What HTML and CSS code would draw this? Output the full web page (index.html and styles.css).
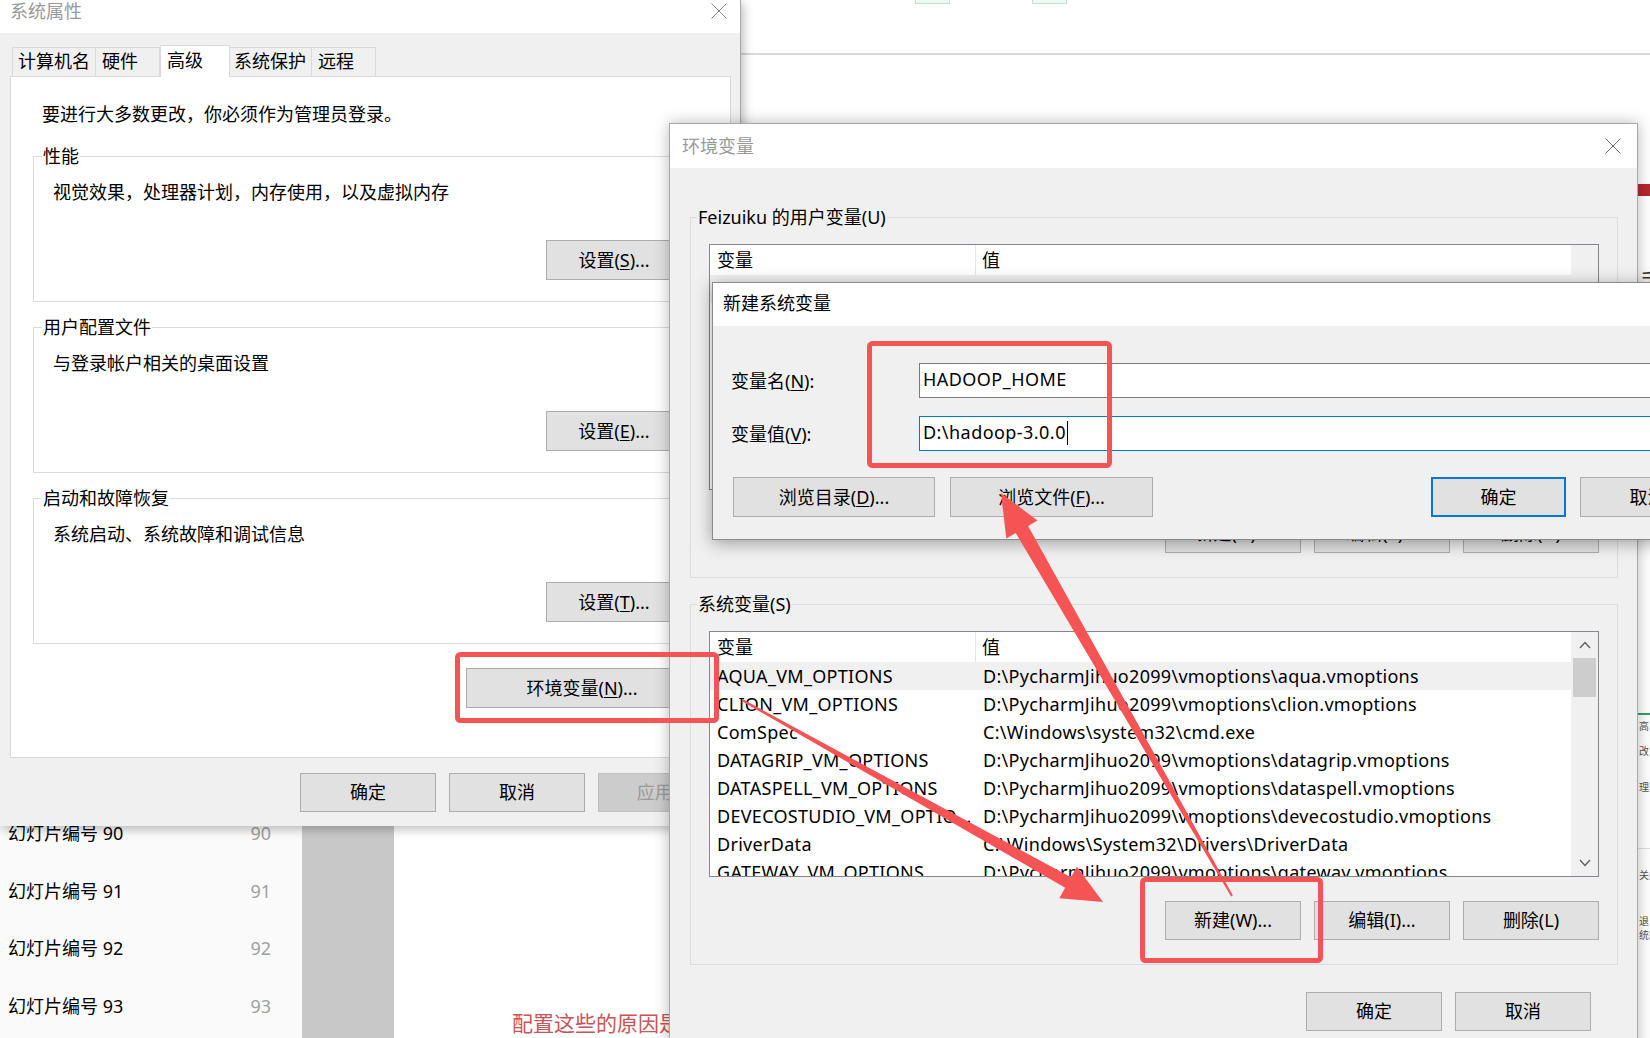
FILE: index.html
```html
<!DOCTYPE html>
<html lang="zh-CN">
<head>
<meta charset="utf-8">
<title>环境变量</title>
<link rel="stylesheet" href="styles.css">
</head>
<body>
<div class="desktop">

  <!-- background application -->
  <div class="bgapp">
    <div class="bg-top">
      <span class="tb-chip"></span>
      <span class="tb-chip"></span>
    </div>
    <div class="bg-main">
      <div class="slides">
        <div class="slide"><span>幻灯片编号 90</span><span class="num">90</span></div>
        <div class="slide"><span>幻灯片编号 91</span><span class="num">91</span></div>
        <div class="slide"><span>幻灯片编号 92</span><span class="num">92</span></div>
        <div class="slide"><span>幻灯片编号 93</span><span class="num">93</span></div>
      </div>
      <div class="gutter"></div>
      <div class="canvas">
        <div class="canvas-body"><p class="red-note">配置这些的原因是</p></div>
        <div class="edge">
          <div class="e-red"></div>
          <div class="e-char">手</div>
          <div class="e-green"></div>
          <div class="e-txt t1">高</div>
          <div class="e-txt t2">改</div>
          <div class="e-txt t3">理器</div>
          <div class="e-line"></div>
          <div class="e-txt t4">关的</div>
          <div class="e-txt t5">退</div>
          <div class="e-txt t6">统故</div>
        </div>
      </div>
    </div>
  </div>

  <!-- 系统属性 -->
  <div class="win sys">
    <div class="titlebar">
      <span class="title">系统属性</span>
      <svg class="close" width="16" height="16" viewBox="0 0 16 16"><path d="M0.5 0.5 L15.5 15.5 M15.5 0.5 L0.5 15.5" stroke="#8a8a8a" stroke-width="1" fill="none"/></svg>
    </div>
    <div class="tabs">
      <div class="tab">计算机名</div>
      <div class="tab">硬件</div>
      <div class="tab active">高级</div>
      <div class="tab">系统保护</div>
      <div class="tab">远程</div>
    </div>
    <div class="panel">
      <p class="intro">要进行大多数更改，你必须作为管理员登录。</p>
      <fieldset class="group">
        <legend>性能</legend>
        <p class="desc">视觉效果，处理器计划，内存使用，以及虚拟内存</p>
        <div class="row-btn"><div class="btn">设置(<u>S</u>)...</div></div>
      </fieldset>
      <fieldset class="group">
        <legend>用户配置文件</legend>
        <p class="desc">与登录帐户相关的桌面设置</p>
        <div class="row-btn"><div class="btn">设置(<u>E</u>)...</div></div>
      </fieldset>
      <fieldset class="group">
        <legend>启动和故障恢复</legend>
        <p class="desc">系统启动、系统故障和调试信息</p>
        <div class="row-btn"><div class="btn">设置(<u>T</u>)...</div></div>
      </fieldset>
      <div class="env-row"><div class="btn wide">环境变量(<u>N</u>)...</div></div>
    </div>
    <div class="sys-foot">
      <div class="btn h39">确定</div>
      <div class="btn h39">取消</div>
      <div class="btn h39 disabled">应用(<u>A</u>)</div>
    </div>
  </div>

  <!-- 环境变量 -->
  <div class="win env">
    <div class="titlebar">
      <span class="title">环境变量</span>
      <svg class="close" width="16" height="16" viewBox="0 0 16 16"><path d="M0.5 0.5 L15.5 15.5 M15.5 0.5 L0.5 15.5" stroke="#6a6a6a" stroke-width="1" fill="none"/></svg>
    </div>
    <div class="env-body">
      <fieldset class="egroup">
        <legend>Feizuiku 的用户变量(U)</legend>
        <div class="lv">
          <div class="lv-main">
            <div class="lv-head"><div class="c1">变量</div><div class="c2">值</div></div>
            <div class="lv-row sel"><div class="c1">OneDrive</div><div class="c2">C:\Users\Feizuiku\OneDrive</div></div>
            <div class="lv-row"><div class="c1">Path</div><div class="c2">C:\Users\Feizuiku\AppData\Local\Microsoft\WindowsApps;</div></div>
            <div class="lv-row"><div class="c1">TEMP</div><div class="c2">C:\Users\Feizuiku\AppData\Local\Temp</div></div>
            <div class="lv-row"><div class="c1">TMP</div><div class="c2">C:\Users\Feizuiku\AppData\Local\Temp</div></div>
          </div>
          <div class="lv-scroll"></div>
        </div>
        <div class="btn-row">
          <div class="btn h39">新建(N)...</div>
          <div class="btn h39">编辑(E)...</div>
          <div class="btn h39">删除(D)</div>
        </div>
      </fieldset>
      <fieldset class="egroup">
        <legend>系统变量(S)</legend>
        <div class="lv">
          <div class="lv-main">
            <div class="lv-head"><div class="c1">变量</div><div class="c2">值</div></div>
            <div class="lv-row sel"><div class="c1">AQUA_VM_OPTIONS</div><div class="c2">D:\PycharmJihuo2099\vmoptions\aqua.vmoptions</div></div>
            <div class="lv-row"><div class="c1">CLION_VM_OPTIONS</div><div class="c2">D:\PycharmJihuo2099\vmoptions\clion.vmoptions</div></div>
            <div class="lv-row"><div class="c1">ComSpec</div><div class="c2">C:\Windows\system32\cmd.exe</div></div>
            <div class="lv-row"><div class="c1">DATAGRIP_VM_OPTIONS</div><div class="c2">D:\PycharmJihuo2099\vmoptions\datagrip.vmoptions</div></div>
            <div class="lv-row"><div class="c1">DATASPELL_VM_OPTIONS</div><div class="c2">D:\PycharmJihuo2099\vmoptions\dataspell.vmoptions</div></div>
            <div class="lv-row"><div class="c1">DEVECOSTUDIO_VM_OPTIO...</div><div class="c2">D:\PycharmJihuo2099\vmoptions\devecostudio.vmoptions</div></div>
            <div class="lv-row"><div class="c1">DriverData</div><div class="c2">C:\Windows\System32\Drivers\DriverData</div></div>
            <div class="lv-row"><div class="c1">GATEWAY_VM_OPTIONS</div><div class="c2">D:\PycharmJihuo2099\vmoptions\gateway.vmoptions</div></div>
          </div>
          <div class="lv-scroll">
            <div class="sb-arrow"><svg width="12" height="8" viewBox="0 0 12 8"><polyline points="1,7 6,1.5 11,7" fill="none" stroke="#606060" stroke-width="1.4"/></svg></div>
            <div class="sb-thumb"></div>
            <div class="sb-track"></div>
            <div class="sb-arrow"><svg width="12" height="8" viewBox="0 0 12 8"><polyline points="1,1 6,6.5 11,1" fill="none" stroke="#606060" stroke-width="1.4"/></svg></div>
          </div>
        </div>
        <div class="btn-row">
          <div class="btn h39">新建(W)...</div>
          <div class="btn h39">编辑(I)...</div>
          <div class="btn h39">删除(L)</div>
        </div>
      </fieldset>
      <div class="env-foot">
        <div class="btn h39">确定</div>
        <div class="btn h39">取消</div>
      </div>
    </div>
  </div>

  <!-- 新建系统变量 -->
  <div class="win nv">
    <div class="titlebar"><span class="title">新建系统变量</span></div>
    <div class="nv-body">
      <div class="nv-row">
        <div class="nv-label">变量名(<u>N</u>):</div>
        <div class="field">HADOOP_HOME</div>
      </div>
      <div class="nv-row second">
        <div class="nv-label">变量值(<u>V</u>):</div>
        <div class="field focus">D:\hadoop-3.0.0<span class="caret"></span></div>
      </div>
      <div class="nv-btns">
        <div class="btn browse">浏览目录(<u>D</u>)...</div>
        <div class="btn browse">浏览文件(<u>F</u>)...</div>
        <div class="btn primary">确定</div>
        <div class="btn ok">取消</div>
      </div>
    </div>
  </div>

  <!-- annotations -->
  <svg class="annot" width="1650" height="1038" viewBox="0 0 1650 1038">
    <g fill="none" stroke="#f65454" stroke-width="5" stroke-linejoin="round">
      <rect x="457.5" y="654.5" width="259" height="66" rx="3"/>
      <rect x="869.5" y="343.5" width="240" height="122" rx="3"/>
      <rect x="1142.5" y="879.5" width="178" height="81" rx="3"/>
    </g>
    <g fill="#f65454">
      <polygon points="741.5,700.9 1065.2,887.7 1059.3,898.2 1103,902 1076.9,866.8 1071.0,877.3 742.5,699.1"/>
      <polygon points="1232.9,895.5 1028.1,525.9 1037.5,520.6 1001,493 1006.3,538.4 1015.7,533.1 1231.1,896.5"/>
    </g>
  </svg>
</div>
</body>
</html>
```

FILE: styles.css
```css
* { box-sizing: border-box; }
html, body { margin: 0; padding: 0; }
body {
  width: 1650px;
  height: 1038px;
  overflow: hidden;
  background: #fff;
  color: #000;
  font-family: "Noto Sans", "Noto Sans CJK SC", sans-serif;
  font-size: 18px;
  line-height: 24px;
}
u { text-decoration: underline; text-underline-offset: 2px; }
p { margin: 0; }

.desktop { position: relative; width: 1650px; height: 1038px; overflow: hidden; }

/* ---------- background app ---------- */
.bgapp { display: flex; flex-direction: column; height: 100%; }
.bg-top {
  height: 55px;
  flex-shrink: 0;
  border-bottom: 2px solid #d9d9d9;
  display: flex;
  gap: 82px;
  padding-left: 915px;
}
.tb-chip {
  width: 35px;
  height: 4px;
  background: #eef9f3;
  border: 1px solid #bfe3cf;
  border-top: 0;
}
.bg-main { flex: 1; display: grid; grid-template-columns: 302px 92px 1fr; }
.slides { background: #fafafa; padding-top: 749px; }
.slide {
  height: 57.7px;
  display: flex;
  align-items: center;
  justify-content: space-between;
  padding: 0 31px 0 8px;
  white-space: nowrap;
}
.slide .num { color: #a0a0a0; }
.gutter { background: #c8c8c8; }
.canvas { display: flex; background: #fff; }
.canvas-body { flex: 1; padding: 955px 0 0 118px; }
.red-note { font-size: 21px; line-height: 26px; color: #c9545a; white-space: nowrap; }
.edge { width: 12px; overflow: hidden; display: flex; flex-direction: column; }
.e-red { margin-top: 129px; height: 12px; background: #b3282d; flex-shrink: 0; }
.e-char { margin-top: 73px; font-size: 22px; line-height: 22px; padding-left: 2px; color: #333; white-space: nowrap; }
.e-green { margin-top: 422px; height: 2px; background: #2aa66a; flex-shrink: 0; }
.e-txt { font-size: 10px; line-height: 12px; color: #555; white-space: nowrap; padding-left: 1px; }
.e-txt.t1 { margin-top: 5px; }
.e-txt.t2 { margin-top: 13px; }
.e-txt.t3 { margin-top: 24px; }
.e-line { margin-top: 55px; height: 1px; background: #ddd; flex-shrink: 0; }
.e-txt.t4 { margin-top: 20px; }
.e-txt.t5 { margin-top: 34px; }
.e-txt.t6 { margin-top: 2px; }

/* ---------- generic window bits ---------- */
.win { position: absolute; display: flex; flex-direction: column; }
.titlebar { background: #fff; display: flex; align-items: center; flex-shrink: 0; }
.close { display: block; flex-shrink: 0; }

.btn {
  height: 40px;
  width: 136px;
  flex-shrink: 0;
  background: #e1e1e1;
  border: 1px solid #adadad;
  text-align: center;
  line-height: 38px;
  white-space: nowrap;
}
.btn.h39 { height: 39px; line-height: 37px; }
.btn.disabled { background: #cccccc; border-color: #bfbfbf; color: #9a9a9a; }

/* ---------- 系统属性 ---------- */
.sys {
  left: 0;
  top: 0;
  width: 741px;
  height: 826px;
  background: #f0f0f0;
  border-right: 1px solid #a8a8a8;
  box-shadow: 2px 3px 10px rgba(0, 0, 0, 0.28);
}
.sys .titlebar { height: 33px; padding-left: 10px; align-items: flex-start; }
.sys .title { line-height: 22px; color: #999; }
.sys .close { margin-left: auto; margin-right: 13px; margin-top: 3px; }

.tabs { height: 43px; display: flex; align-items: flex-end; padding-left: 12px; flex-shrink: 0; }
.tab {
  height: 29px;
  line-height: 27px;
  padding-left: 6px;
  background: #f0f0f0;
  border-top: 1px solid #d9d9d9;
  border-right: 1px solid #d9d9d9;
  white-space: nowrap;
}
.tab:nth-child(1) { width: 84px; border-left: 1px solid #d9d9d9; padding-left: 5px; }
.tab:nth-child(2) { width: 64px; }
.tab:nth-child(3) { width: 70px; }
.tab:nth-child(4) { width: 82px; padding-left: 4px; }
.tab:nth-child(5) { width: 64px; }
.tab.active {
  height: 32px;
  line-height: 29px;
  background: #fff;
  border-left: 1px solid #d9d9d9;
  margin-bottom: -1px;
  position: relative;
  z-index: 1;
}

.panel {
  margin: 0 9px 0 10px;
  height: 682px;
  flex-shrink: 0;
  background: #fff;
  border: 1px solid #d9d9d9;
  padding: 25px 22px 0 22px;
  display: flex;
  flex-direction: column;
}
.intro { padding-left: 9px; line-height: 24px; }
.group {
  margin: 19px 0 0;
  padding: 13px 25px 21px 0;
  border: 1px solid #dcdcdc;
  min-width: 0;
}
.group + .group { margin-top: 14px; }
.group legend { margin-left: 8px; padding: 0 1px; line-height: 22px; }
.group .desc { padding-left: 19px; line-height: 24px; }
.row-btn { display: flex; justify-content: flex-end; margin-top: 36px; }
.env-row { display: flex; justify-content: flex-end; margin-top: 24px; margin-right: 10px; }
.btn.wide { width: 232px; }
.sys-foot { display: flex; justify-content: flex-end; gap: 13px; padding-right: 6px; margin-top: 15px; }

/* ---------- 环境变量 ---------- */
.env {
  left: 669px;
  top: 123px;
  width: 969px;
  height: 940px;
  background: #f0f0f0;
  border: 1px solid #a8a8a8;
  box-shadow: 0 0 14px rgba(0, 0, 0, 0.28);
}
.env .titlebar { height: 44px; padding-left: 12px; }
.env .title { color: #999; line-height: 24px; }
.env .close { margin-left: auto; margin-right: 16px; }
.env-body { padding: 0 19px 0 20px; display: flex; flex-direction: column; }
.egroup {
  margin: 38px 0 0;
  padding: 16px 0 24px;
  border: 1px solid #dcdcdc;
  min-width: 0;
}
.egroup + .egroup { margin-top: 15px; }
.egroup legend { margin-left: 6px; padding: 0 1px; line-height: 22px; }

.lv {
  margin: 0 18px;
  height: 246px;
  border: 1px solid #828790;
  background: #fff;
  display: flex;
  overflow: hidden;
}
.lv-main { flex: 1; min-width: 0; overflow: hidden; }
.lv-head, .lv-row { display: flex; white-space: nowrap; }
.lv-head { height: 30px; line-height: 30px; }
.lv-row { height: 28px; line-height: 28px; letter-spacing: 0.3px; }
.lv-row.sel { background: #f0f0f0; }
.c1 { width: 266px; flex-shrink: 0; padding-left: 7px; overflow: hidden; }
.c2 { flex: 1; padding-left: 7px; overflow: hidden; }
.lv-head .c1 { border-right: 1px solid #e5e5e5; }
.lv-head .c2 { padding-left: 6px; }
.lv-scroll {
  width: 27px;
  flex-shrink: 0;
  background: #f0f0f0;
  display: flex;
  flex-direction: column;
  align-items: center;
}
.sb-arrow { height: 26px; width: 100%; display: flex; align-items: center; justify-content: center; flex-shrink: 0; }
.sb-thumb { width: 23px; height: 39px; background: #cdcdcd; flex-shrink: 0; }
.sb-track { flex: 1; }
.btn-row { margin: 24px 18px 0; display: flex; justify-content: flex-end; gap: 13px; }
.env-foot { display: flex; justify-content: flex-end; gap: 13px; margin-top: 27px; padding-right: 27px; }

/* ---------- 新建系统变量 ---------- */
.nv {
  left: 712px;
  top: 282px;
  width: 1030px;
  height: 258px;
  background: #f0f0f0;
  border: 1px solid #8a8a8a;
  box-shadow: 0 3px 16px rgba(0, 0, 0, 0.35);
}
.nv .titlebar { height: 43px; padding: 8px 0 0 10px; align-items: flex-start; }
.nv .title { line-height: 24px; }
.nv-body { padding: 37px 26px 0 18px; display: flex; flex-direction: column; }
.nv-row { display: flex; align-items: center; height: 35px; }
.nv-row.second { margin-top: 18px; }
.nv-label { width: 188px; flex-shrink: 0; white-space: nowrap; }
.field {
  flex: 1;
  height: 35px;
  background: #fff;
  border: 1px solid #7a7a7a;
  line-height: 33px;
  padding-left: 3px;
  padding-bottom: 2px;
  letter-spacing: 0.45px;
  white-space: nowrap;
  display: flex;
  align-items: center;
}
.field.focus { border-color: #0078d7; }
.caret { display: inline-block; width: 1px; height: 24px; background: #000; margin-left: 1px; }
.nv-btns { display: flex; margin-top: 26px; margin-left: 2px; }
.btn.browse { width: 202px; }
.btn.browse + .btn.browse { width: 203px; margin-left: 15px; }
.btn.primary { width: 135px; margin-left: auto; border: 2px solid #0078d7; line-height: 36px; }
.btn.ok { width: 135px; margin-left: 14px; }

/* ---------- annotations ---------- */
.annot { position: absolute; left: 0; top: 0; pointer-events: none; }
```
